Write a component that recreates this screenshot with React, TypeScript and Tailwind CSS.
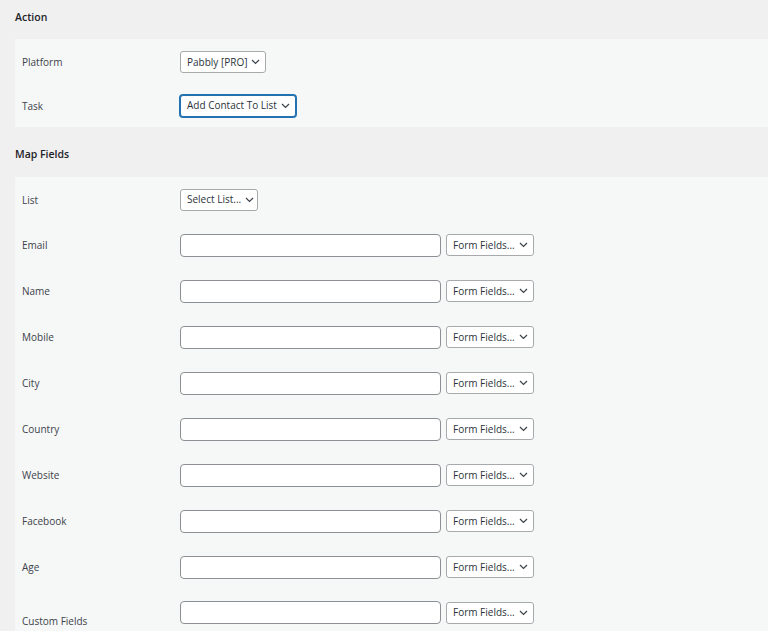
import React from "react";

const FONT = { fontFamily: '"Open Sans", "Noto Sans", sans-serif' };

function Chevron() {
  return (
    <svg width="9" height="6" viewBox="0 0 9 6" className="shrink-0">
      <polyline points="1,1 4.5,4.5 8,1" fill="none" stroke="#3c434a" strokeWidth="1.2" />
    </svg>
  );
}

function Select({ label, focused, width }: { label: string; focused?: boolean; width: string }) {
  return (
    <div
      className={`flex h-[22px] items-center justify-between gap-1 rounded-[3px] border bg-white pl-[6px] pr-[5px] text-[10px] text-[#2c3338] ${width} ${
        focused ? "border-[#2271b1] shadow-[0_0_0_1px_#2271b1]" : "border-[#a7aaad]"
      }`}>
      <span className="whitespace-nowrap">{label}</span>
      <Chevron />
    </div>
  );
}

function Row({ label, children, className = "h-[44px] items-center" }: { label: string; children: React.ReactNode; className?: string }) {
  return (
    <div className={`flex ${className}`}>
      <div className="w-[165px] shrink-0 pl-[7px] pt-[1px] text-[10px] text-[#3c434a]">{label}</div>
      <div className="flex items-center gap-[5px]">{children}</div>
    </div>
  );
}

const FIELDS = ["Email", "Name", "Mobile", "City", "Country", "Website", "Facebook", "Age"];

function FieldControls() {
  return (
    <>
      <div className="h-[23px] w-[261px] rounded-[4px] border border-[#8c8f94] bg-white" />
      <Select label="Form Fields..." width="w-[88px]" />
    </>
  );
}

export default function App() {
  return (
    <div className="h-[631px] overflow-hidden bg-[#f0f0f1]" style={FONT}>
      <div className="pl-[15px]">
        <h2 className="flex h-[39px] items-center pb-[3px] text-[10.5px] font-semibold text-[#1d2327]">Action</h2>
        <div className="bg-[#f6f7f7] pt-[1px]">
          <Row label="Platform" className="h-[44px] items-center">
            <Select label="Pabbly [PRO]" width="w-[86px]" />
          </Row>
          <Row label="Task" className="h-[43px] items-center">
            <Select label="Add Contact To List" width="w-[116px]" focused />
          </Row>
        </div>
        <h2 className="flex h-[50px] items-center pt-[6px] text-[10.5px] font-semibold text-[#1d2327]">Map Fields</h2>
        <div className="bg-[#f6f7f7]">
          <Row label="List" className="h-[45px] items-center">
            <Select label="Select List..." width="w-[78px]" />
          </Row>
          {FIELDS.map((f) => (
            <Row key={f} label={f} className="h-[46px] items-center">
              <FieldControls />
            </Row>
          ))}
          <div className="flex h-[60px] items-start">
            <div className="w-[165px] shrink-0 pl-[7px] pt-[24px] text-[10px] text-[#3c434a]">Custom Fields</div>
            <div className="flex items-center gap-[5px] pt-[11px]">
              <FieldControls />
            </div>
          </div>
        </div>
      </div>
    </div>
  );
}
